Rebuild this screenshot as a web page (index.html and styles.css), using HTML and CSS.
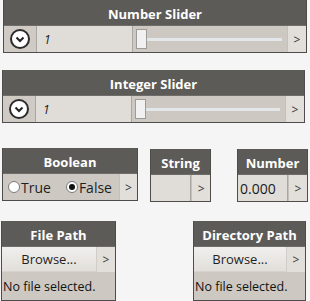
FILE: index.html
```html
<!DOCTYPE html>
<html>
<head>
<meta charset="utf-8">
<link rel="stylesheet" href="styles.css">
</head>
<body>
<div class="canvas">
  <div class="node slider-node n1">
    <div class="head">Number Slider</div>
    <div class="row">
      <div class="expand"><span class="circle"><svg width="10" height="7" viewBox="0 0 10 7"><path d="M1.5 1.5 L5 5 L8.5 1.5" fill="none" stroke="#222" stroke-width="2"/></svg></span></div>
      <div class="field"><i>1</i></div>
      <div class="track-area"><span class="thumb"></span><span class="track"></span></div>
      <div class="arrow">&gt;</div>
    </div>
  </div>

  <div class="node slider-node n2">
    <div class="head">Integer Slider</div>
    <div class="row">
      <div class="expand"><span class="circle"><svg width="10" height="7" viewBox="0 0 10 7"><path d="M1.5 1.5 L5 5 L8.5 1.5" fill="none" stroke="#222" stroke-width="2"/></svg></span></div>
      <div class="field"><i>1</i></div>
      <div class="track-area"><span class="thumb"></span><span class="track"></span></div>
      <div class="arrow">&gt;</div>
    </div>
  </div>

  <div class="line3">
    <div class="node bool">
      <div class="head">Boolean</div>
      <div class="row">
        <div class="radios">
          <label class="radio"><span class="dot"></span>True</label>
          <label class="radio"><span class="dot on"></span>False</label>
        </div>
        <div class="arrow">&gt;</div>
      </div>
    </div>
    <div class="node str">
      <div class="head">String</div>
      <div class="row">
        <div class="field"></div>
        <div class="arrow">&gt;</div>
      </div>
    </div>
    <div class="node num">
      <div class="head">Number</div>
      <div class="row">
        <div class="field numval">0.000</div>
        <div class="arrow">&gt;</div>
      </div>
    </div>
  </div>

  <div class="line4">
    <div class="node path fp">
      <div class="head">File Path</div>
      <div class="row">
        <div class="browse">Browse...</div>
        <div class="arrow">&gt;</div>
      </div>
      <div class="status">No file selected.</div>
    </div>
    <div class="node path dp">
      <div class="head">Directory Path</div>
      <div class="row">
        <div class="browse">Browse...</div>
        <div class="arrow">&gt;</div>
      </div>
      <div class="status">No file selected.</div>
    </div>
  </div>
</div>
</body>
</html>
```

FILE: styles.css
```css
* { box-sizing: border-box; }
html, body { margin: 0; padding: 0; }
body {
  background: #f5f5f5;
  font-family: "Open Sans", "DejaVu Sans", sans-serif;
  font-size: 12px;
  color: #1a1a1a;
  width: 310px;
  height: 301px;
  overflow: hidden;
}
.canvas { display: flex; flex-direction: column; }

.node {
  border: 1px solid #4e4d4b;
  border-top: 0;
  background: #cdc9c2;
  display: flex;
  flex-direction: column;
}
.head {
  height: 26px;
  background: #5d5b58;
  color: #fff;
  font-weight: 700;
  font-size: 13px;
  display: flex;
  align-items: center;
  justify-content: center;
  padding-top: 2px;
  border-bottom: 1px solid #6f6d6a;
}
.row {
  height: 26px;
  display: flex;
  align-items: stretch;
}
.arrow {
  width: 19px;
  background: #e2dfda;
  border-left: 1px solid #c4c1bb;
  display: flex;
  align-items: center;
  justify-content: center;
  font-size: 12px;
  color: #333;
}

/* sliders */
.n1 { margin-left: 3px; width: 304px; }
.n2 { margin-left: 2px; width: 303px; margin-top: 17px; }
.expand {
  width: 33px;
  background: #cfcbc4;
  border-right: 1px solid #a9a7a3;
  display: flex;
  align-items: center;
  justify-content: center;
}
.circle {
  width: 20px;
  height: 20px;
  border-radius: 50%;
  background: #fff;
  border: 2px solid #2b2b2b;
  display: flex;
  align-items: center;
  justify-content: center;
}
.circle svg { display: block; margin-top: 1px; }
.field {
  width: 96px;
  background: #e0ddd8;
  border-right: 1px solid #a9a7a3;
  display: flex;
  align-items: center;
  padding-left: 7px;
  font-size: 12px;
}
.field i { color: #1a1a1a; }
.track-area {
  flex: 1;
  background: #cdc9c2;
  display: flex;
  align-items: center;
  padding-left: 3px;
  padding-right: 5px;
}
.thumb {
  width: 11px;
  height: 20px;
  background: #f1f1f1;
  border: 1px solid #9d9b98;
  flex: none;
}
.track {
  flex: 1;
  height: 3px;
  background: #e4e7ea;
}

/* row 3 */
.line3 { display: flex; margin-top: 25px; align-items: flex-start; }
.bool { margin-left: 2px; width: 136px; }
.radios {
  flex: 1;
  display: flex;
  align-items: center;
  padding-left: 5px;
  gap: 15px;
  font-size: 14px;
  color: #1f1f1f;
}
.radio { display: flex; align-items: center; }
.dot {
  width: 12px;
  height: 12px;
  border-radius: 50%;
  background: #fff;
  border: 1px solid #7a7a7a;
  margin-right: 1px;
  display: flex;
  align-items: center;
  justify-content: center;
}
.dot.on::after {
  content: "";
  width: 6px;
  height: 6px;
  border-radius: 50%;
  background: #111;
}
.bool .arrow { width: 18px; }
.str { margin-left: 12px; width: 61px; margin-top: 1px; }
.str .field { width: 41px; }
.num { margin-left: 26px; width: 71px; margin-top: 1px; }
.num .field { width: 50px; padding-left: 2px; font-size: 14px; }

/* row 4 */
.line4 { display: flex; margin-top: 19px; align-items: flex-start; }
.path { height: 80px; }
.fp { margin-left: 1px; width: 115px; }
.dp { margin-left: 77px; width: 113px; }
.path .row { height: 25px; }
.browse {
  flex: 1;
  background: linear-gradient(#f0efed, #e2dfda);
  display: flex;
  align-items: center;
  justify-content: center;
  font-size: 13px;
  color: #1f1f1f;
  border-bottom: 1px solid #d6d3ce;
}
.path .arrow { border-left: 1px solid #d1cec9; }
.status {
  flex: 1;
  display: flex;
  align-items: center;
  padding-left: 1px;
  font-size: 12.5px;
  color: #111;
}
```
